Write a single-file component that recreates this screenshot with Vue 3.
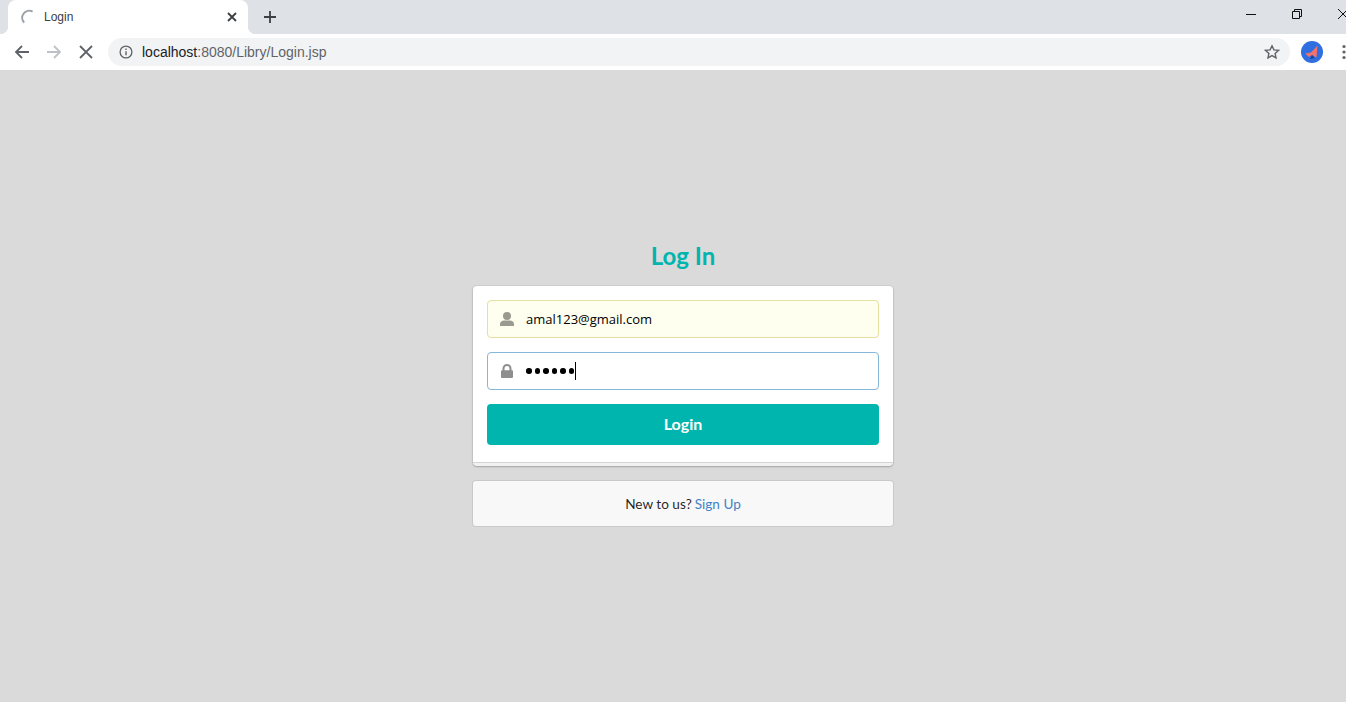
<template>
  <div class="window">
    <!-- browser tab strip -->
    <div class="tabstrip">
      <div class="tab">
        <svg class="spinner" viewBox="0 0 16 16"><path d="M12.6 2.6A7 7 0 0 0 4.2 13.6" fill="none" stroke="#9aa0a6" stroke-width="2"/></svg>
        <span class="tab-title">Login</span>
        <svg class="tab-close" viewBox="0 0 10 10"><path d="M1 1l8 8M9 1l-8 8" stroke="#3c4043" stroke-width="1.8"/></svg>
      </div>
      <svg class="new-tab" viewBox="0 0 12 12"><path d="M6 0v12M0 6h12" stroke="#3c4043" stroke-width="1.8"/></svg>
      <div class="win-controls">
        <svg class="win-btn" viewBox="0 0 10 10"><path d="M0 5.5h10" stroke="#111" stroke-width="1"/></svg>
        <svg class="win-btn" viewBox="0 0 10 10"><path d="M.5 2.5h7v7h-7zM2.5 2.5v-2h7v7h-2" fill="none" stroke="#111" stroke-width="1"/></svg>
        <svg class="win-btn" viewBox="0 0 10 10"><path d="M0 0l10 10M10 0L0 10" stroke="#111" stroke-width="1"/></svg>
      </div>
    </div>

    <!-- toolbar -->
    <div class="toolbar">
      <svg class="nav" viewBox="0 0 16 16"><path d="M15 8H2M8 2L2 8l6 6" fill="none" stroke="#5f6368" stroke-width="1.8"/></svg>
      <svg class="nav" viewBox="0 0 16 16"><path d="M1 8h13M8 2l6 6-6 6" fill="none" stroke="#bdc1c6" stroke-width="1.8"/></svg>
      <svg class="nav stop" viewBox="0 0 14 14"><path d="M1 1l12 12M13 1L1 13" fill="none" stroke="#5f6368" stroke-width="1.8"/></svg>
      <div class="omnibox">
        <svg class="info" viewBox="0 0 14 14">
          <circle cx="7" cy="7" r="5.9" fill="none" stroke="#5f6368" stroke-width="1.3"/>
          <path d="M7 6.2v4M7 3.6v1.5" stroke="#5f6368" stroke-width="1.4"/>
        </svg>
        <span class="url"><span class="host">localhost</span>:8080/Libry/Login.jsp</span>
        <svg class="star" viewBox="0 0 16 16"><path d="M8 1.8l1.9 4.1 4.5.5-3.3 3 .9 4.4L8 11.6l-4 2.2.9-4.4-3.3-3 4.5-.5z" fill="none" stroke="#5f6368" stroke-width="1.4"/></svg>
      </div>
      <div class="avatar">
        <svg viewBox="0 0 22 22">
          <circle cx="11" cy="11" r="11" fill="#2f6fe0"/>
          <path d="M4 12.5l6-1 6.5-7-1 12-4.5-2.5-3 2z" fill="#f4726b"/>
          <path d="M11 14l2.5 3-4.5 1z" fill="#1d3f8f"/>
        </svg>
      </div>
      <svg class="kebab" viewBox="0 0 4 16">
        <circle cx="2" cy="2.5" r="1.6" fill="#5f6368"/><circle cx="2" cy="8" r="1.6" fill="#5f6368"/><circle cx="2" cy="13.5" r="1.6" fill="#5f6368"/>
      </svg>
    </div>

    <!-- page -->
    <main class="page">
      <div class="column">
        <h2 class="heading">Log In</h2>
        <form class="card" @submit.prevent>
          <div class="field autofill">
            <svg class="field-icon" viewBox="0 0 14 14"><circle cx="7" cy="4" r="4" fill="#9a9a90"/><path d="M0 14v-2C0 9.6 2 8.4 4 8.4h6c2 0 4 1.2 4 3.6v2z" fill="#9a9a90"/></svg>
            <span class="value">amal123@gmail.com</span>
          </div>
          <div class="field focused">
            <svg class="field-icon" viewBox="0 0 14 14"><path d="M3.5 7V4.5a3.5 3.5 0 0 1 7 0V7" fill="none" stroke="#8e8e8e" stroke-width="2"/><rect x="1" y="6.2" width="12" height="7.8" rx="1" fill="#8e8e8e"/></svg>
            <span class="dots"><i v-for="n in 6" :key="n"></i></span><span class="caret"></span>
          </div>
          <button class="submit" type="submit">Login</button>
        </form>
        <div class="message">New to us? <a href="#" @click.prevent>Sign Up</a></div>
      </div>
    </main>
  </div>
</template>

<script setup>
</script>

<style>
html, body { margin: 0; overflow: hidden; }
</style>

<style scoped>
.window {
  width: 1346px;
  height: 702px;
  display: flex;
  flex-direction: column;
  overflow: hidden;
  font-family: "Liberation Sans", Arial, sans-serif;
}

/* tab strip */
.tabstrip {
  height: 34px;
  flex: none;
  display: flex;
  align-items: flex-end;
  background: #dee1e6;
}
.tab {
  position: relative;
  width: 240px;
  height: 34px;
  margin-left: 8px;
  box-sizing: border-box;
  padding: 0 11px 0 12px;
  display: flex;
  align-items: center;
  background: #fff;
  border-radius: 8px 8px 0 0;
}
.tab::before, .tab::after {
  content: "";
  position: absolute;
  bottom: 0;
  width: 8px;
  height: 8px;
}
.tab::before { left: -8px; background: radial-gradient(circle at 0 0, #dee1e6 8px, #fff 8.5px); }
.tab::after { right: -8px; background: radial-gradient(circle at 100% 0, #dee1e6 8px, #fff 8.5px); }
.spinner { width: 16px; height: 16px; }
.tab-title { margin-left: 8px; font-size: 12px; color: #3c4043; flex: 1; }
.tab-close { width: 10px; height: 10px; }
.new-tab { width: 12px; height: 12px; margin: 0 0 11px 16px; }
.win-controls {
  margin-left: auto;
  height: 34px;
  width: 118px;
  display: flex;
  gap: 36px;
  padding-top: 9px;
  box-sizing: border-box;
  margin-right: -18px;
}
.win-btn { width: 10px; height: 10px; flex: none; }

/* toolbar */
.toolbar {
  height: 36px;
  flex: none;
  display: flex;
  align-items: center;
  background: #fff;
  padding-left: 14px;
  box-sizing: border-box;
}
.nav { width: 16px; height: 16px; margin-right: 16px; flex: none; }
.stop { width: 14px; height: 14px; margin-left: 1px; margin-right: 15px; }
.omnibox {
  width: 1182px;
  height: 28px;
  border-radius: 14px;
  background: #f1f3f4;
  display: flex;
  align-items: center;
  padding: 0 10px 0 11px;
  box-sizing: border-box;
  flex: none;
}
.info { width: 14px; height: 14px; flex: none; }
.url { margin-left: 9px; flex: 1; font-size: 14px; color: #5f6368; }
.host { color: #202124; }
.star { width: 16px; height: 16px; }
.avatar { width: 22px; height: 22px; margin-left: 11px; flex: none; }
.avatar svg { display: block; width: 22px; height: 22px; }
.kebab { width: 4px; height: 16px; margin-left: 19px; flex: none; }

/* page */
.page {
  flex: 1;
  background: #dadada;
  display: flex;
  align-items: center;
  justify-content: center;
  padding-left: 20px;
  font-family: Lato, "Liberation Sans", sans-serif;
}
.column { width: 420px; padding-bottom: 4px; }
.heading {
  margin: 0 0 16px;
  text-align: center;
  font-size: 24px;
  line-height: 29px;
  font-weight: 700;
  color: #00b5ad;
}
.card {
  display: flex;
  flex-direction: column;
  gap: 14px;
  padding: 14px 14px 18px;
  background: #fff;
  border-radius: 4px;
  border-bottom: 3px solid #f1f1f1;
  box-shadow: 0 1px 2px 0 rgba(34, 36, 38, .25), 0 0 0 1px rgba(34, 36, 38, .06);
  position: relative;
}
.card::after {
  content: "";
  position: absolute;
  left: 0;
  right: 0;
  bottom: 0;
  height: 1px;
  background: #d4d4d5;
}
.field {
  height: 38px;
  box-sizing: border-box;
  display: flex;
  align-items: center;
  padding-left: 12px;
  border: 1px solid rgba(34, 36, 38, .15);
  border-radius: 4px;
  font-size: 14px;
}
.autofill { background: #fffff0; border-color: #e5dfa0; }
.focused { background: #fff; border-color: #85b7d9; }
.field-icon { width: 14px; height: 14px; flex: none; }
.value { margin-left: 12px; color: #000; font-family: "Open Sans", sans-serif; font-size: 13px; }
.dots { display: flex; gap: 3px; margin-left: 12px; }
.dots i { width: 5.5px; height: 5.5px; border-radius: 50%; background: #000; }
.caret { width: 1px; height: 18px; background: #000; margin-left: 1px; }
.submit {
  height: 41px;
  border: 0;
  border-radius: 4px;
  padding: 0 0 2px;
  background: #00b5ad;
  color: #fff;
  font: 700 16px Lato, sans-serif;
}
.message {
  margin: 14px -1px 0;
  height: 47px;
  box-sizing: border-box;
  display: flex;
  align-items: center;
  justify-content: center;
  gap: 3px;
  background: #f8f8f9;
  border-radius: 4px;
  box-shadow: 0 0 0 1px rgba(34, 36, 38, .22) inset;
  font-size: 13.6px;
  color: rgba(0, 0, 0, .87);
}
.message a { color: #4183c4; text-decoration: none; }
</style>
